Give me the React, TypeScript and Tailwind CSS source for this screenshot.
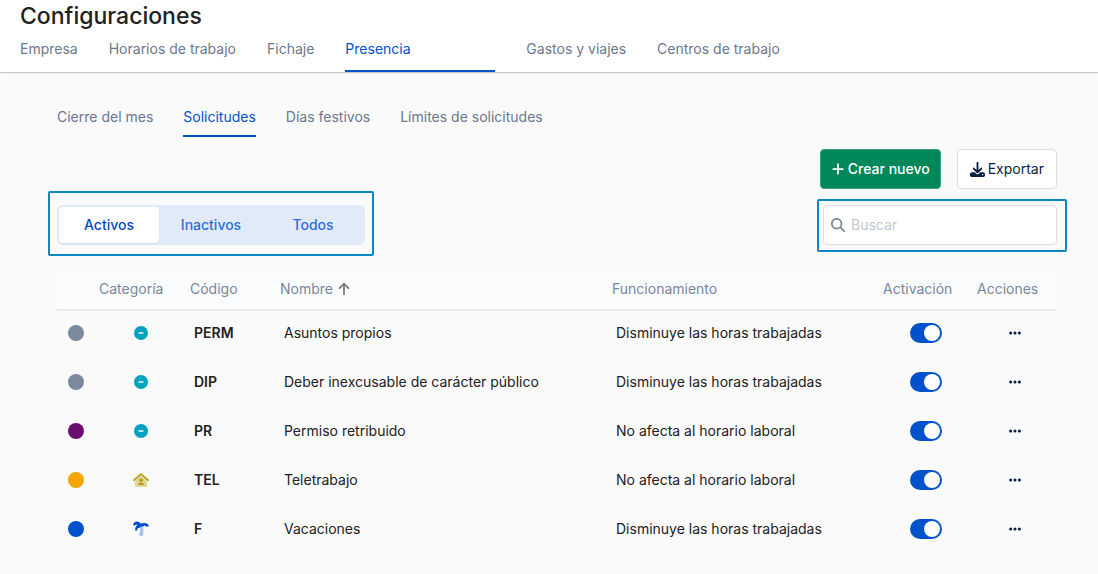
import { useState } from "react";
import {
  FaArrowUp,
  FaCircleMinus,
  FaDownload,
  FaEllipsis,
  FaMagnifyingGlass,
  FaPlus,
} from "react-icons/fa6";
import { clsx } from "clsx";

type Category = "minus" | "home" | "palm";

interface RequestType {
  code: string;
  name: string;
  effect: string;
  category: Category;
  dot: string;
}

const mainTabs = [
  "Empresa",
  "Horarios de trabajo",
  "Fichaje",
  "Presencia",
  "Gastos y viajes",
  "Centros de trabajo",
];

const subTabs = ["Cierre del mes", "Solicitudes", "Días festivos", "Límites de solicitudes"];

const filters = ["Activos", "Inactivos", "Todos"];

const requestTypes: RequestType[] = [
  { code: "PERM", name: "Asuntos propios", effect: "Disminuye las horas trabajadas", category: "minus", dot: "bg-[#7c899d]" },
  { code: "DIP", name: "Deber inexcusable de carácter público", effect: "Disminuye las horas trabajadas", category: "minus", dot: "bg-[#7c899d]" },
  { code: "PR", name: "Permiso retribuido", effect: "No afecta al horario laboral", category: "minus", dot: "bg-[#6a0f70]" },
  { code: "TEL", name: "Teletrabajo", effect: "No afecta al horario laboral", category: "home", dot: "bg-[#f5a504]" },
  { code: "F", name: "Vacaciones", effect: "Disminuye las horas trabajadas", category: "palm", dot: "bg-[#0052cc]" },
];

function HomeIcon() {
  return (
    <svg viewBox="0 0 16 14" className="h-[14px] w-4" aria-hidden="true">
      <path d="M2 6.6 8 1.4l6 5.2v6.2c0 .7-.5 1.2-1.2 1.2H3.2C2.5 14 2 13.5 2 12.8z" fill="#e0d69a" />
      <path d="M.8 7.2 8 1l7.200 6.200" fill="none" stroke="#b89b0c" strokeWidth="1.6" strokeLinecap="round" strokeLinejoin="round" />
      <circle cx="8" cy="7.2" r="1.8" fill="#b89b0c" />
      <path d="M5 12c0-1.400 1-2.300 2.300-2.300h1.400C10 9.700 11 10.600 11 12z" fill="#b89b0c" />
    </svg>
  );
}

function PalmIcon() {
  return (
    <svg viewBox="0 0 16 15" className="h-[15px] w-4" aria-hidden="true">
      <path d="M7.4 5h2.400c.8 3 .8 6.400.2 9.200-.1.500-.4.700-.8.700H7.100c-.5 0-.9-.4-.8-.9C7 11 7.500 8 7.400 5z" fill="#a5c1ee" />
      <path
        d="M7.7 2.6C6.7 1.200 5.200.5 3.700.6 1.900.7.500 2 .1 3.800c-.1.400.2.700.6.700h1.500l1-1.200.8 1.200c-1.600 1.300-2.200 3.300-1.600 5.100.1.400.6.500.9.200l1.200-1.200.3-1.700 1.500.1L8.400 5.600h2.200l.9-1.300 1 1.300h2.800c.4 0 .6-.3.500-.7-.5-1.900-2-3-4-3-1.700 0-3.200.3-4.100.7z"
        fill="#0052cc"
      />
    </svg>
  );
}

function CategoryIcon({ category }: { category: Category }) {
  if (category === "home") return <HomeIcon />;
  if (category === "palm") return <PalmIcon />;
  return <FaCircleMinus className="size-[14px] text-[#00a3bf]" />;
}

function Toggle({ label }: { label: string }) {
  const [checked, setChecked] = useState(true);

  return (
    <input
      type="checkbox"
      role="switch"
      aria-label={label}
      checked={checked}
      onChange={(e) => setChecked(e.target.checked)}
      className="block h-5 w-8 cursor-pointer appearance-none rounded-full bg-gray-300 p-[2px] before:block before:size-4 before:rounded-full before:bg-white checked:bg-[#0052cc] checked:before:ml-3"
    />
  );
}

export default function App() {
  const [filter, setFilter] = useState("Activos");
  const [search, setSearch] = useState("");

  return (
    <div className="min-h-screen bg-[#fafafa] font-['Inter',sans-serif] text-sm text-[#212121]">
      {/* Header */}
      <header className="border-b border-[#c8c8c8] bg-white px-5 shadow-xs">
        <h1 className="text-[23px] leading-8 font-medium">Configuraciones</h1>
        <nav className="flex gap-[31px]">
          {mainTabs.map((tab) => (
            <a
              key={tab}
              href="#"
              className={clsx(
                "border-b-2 pt-[7px] pb-[11px] whitespace-nowrap",
                tab === "Presencia"
                  ? "w-[150px] border-[#0052cc] text-[#0052cc]"
                  : "border-transparent text-[#6b778c]"
              )}
            >
              {tab}
            </a>
          ))}
        </nav>
      </header>

      <main className="pt-[34px] pr-[41px] pb-5 pl-[57px]">
        {/* Sub tabs */}
        <nav className="flex gap-[30px]">
          {subTabs.map((tab) => (
            <a
              key={tab}
              href="#"
              className={clsx(
                "border-b-2 pb-2 whitespace-nowrap",
                tab === "Solicitudes"
                  ? "border-[#0052cc] text-[#0052cc]"
                  : "border-transparent text-[#6b778c]"
              )}
            >
              {tab}
            </a>
          ))}
        </nav>

        {/* Actions */}
        <div className="mt-3 flex justify-end gap-4">
          <button className="flex h-10 items-center gap-[3px] rounded border border-[#36a57c] bg-[#00875a] px-[10px] font-medium text-white">
            <FaPlus className="size-[14px]" />
            Crear nuevo
          </button>
          <button className="flex h-10 items-center gap-[3px] rounded border border-[#dedede] bg-white px-3 text-[#091e42]">
            <FaDownload className="size-[15px]" />
            Exportar
          </button>
        </div>

        {/* Filters */}
        <div className="mt-4 flex items-center justify-between">
          <div className="relative">
            <div className="flex h-10 gap-[2px] rounded-md bg-[#e0eaf9] p-[2px]">
              {filters.map((item) => (
                <button
                  key={item}
                  onClick={() => setFilter(item)}
                  className={clsx(
                    "w-[100px] rounded font-medium",
                    filter === item ? "bg-white text-[#0747c4] shadow-xs" : "text-[#2f6fd8]"
                  )}
                >
                  {item}
                </button>
              ))}
            </div>
            <div className="pointer-events-none absolute -top-[14px] -right-[9px] -bottom-[11px] -left-[9px] rounded-xs border-2 border-[#0a86c8]" />
          </div>

          <div className="relative">
            <label className="flex h-10 w-[234px] items-center gap-[6px] rounded border border-[#dedede] bg-white px-[7px]">
              <FaMagnifyingGlass className="size-[14px] shrink-0 text-[#7a869a]" />
              <input
                type="text"
                aria-label="Buscar"
                placeholder="Buscar"
                value={search}
                onChange={(e) => setSearch(e.target.value)}
                className="w-full min-w-0 outline-none placeholder:text-[#c1c7d0]"
              />
            </label>
            <div className="pointer-events-none absolute -top-[6px] -right-[10px] -bottom-[7px] -left-[6px] rounded-xs border-2 border-[#0a86c8]" />
          </div>
        </div>

        {/* Table */}
        <table className="mt-6 w-full table-fixed border-separate border-spacing-0 text-left">
          <colgroup>
            <col className="w-[38px]" />
            <col className="w-[91px]" />
            <col className="w-[90px]" />
            <col />
            <col className="w-[271px]" />
            <col className="w-[94px]" />
            <col className="w-[84px]" />
          </colgroup>
          <thead className="text-[#7a869a] shadow-[0_2px_0_#e9ebee]">
            <tr className="h-10 bg-[#fafbfd]">
              <td />
              <th className="px-1 font-normal">Categoría</th>
              <th className="px-1 font-normal">Código</th>
              <th className="px-1 font-normal">
                <span className="flex items-center gap-1">
                  Nombre
                  <FaArrowUp className="size-[14px] text-[#757575]" />
                </span>
              </th>
              <th className="px-1 font-normal">Funcionamiento</th>
              <th className="px-1 font-normal">Activación</th>
              <th className="px-1 font-normal">Acciones</th>
            </tr>
          </thead>
          <tbody>
            {requestTypes.map((row) => (
              <tr key={row.code} className="h-[49px] [&>td]:pb-[2px]">
                <td>
                  <div className={clsx("mx-auto size-4 rounded-full", row.dot)} />
                </td>
                <td>
                  <div className="flex justify-center">
                    <CategoryIcon category={row.category} />
                  </div>
                </td>
                <td className="px-2 font-semibold">{row.code}</td>
                <td className="px-2">{row.name}</td>
                <td className="px-2">{row.effect}</td>
                <td>
                  <div className="flex justify-center">
                    <Toggle label={`Activar ${row.name}`} />
                  </div>
                </td>
                <td>
                  <button
                    aria-label={`Acciones de ${row.name}`}
                    className="mx-auto flex size-10 items-center justify-center rounded bg-[#f9fafc] text-[#091e42]"
                  >
                    <FaEllipsis className="size-[14px]" />
                  </button>
                </td>
              </tr>
            ))}
          </tbody>
        </table>
      </main>
    </div>
  );
}
